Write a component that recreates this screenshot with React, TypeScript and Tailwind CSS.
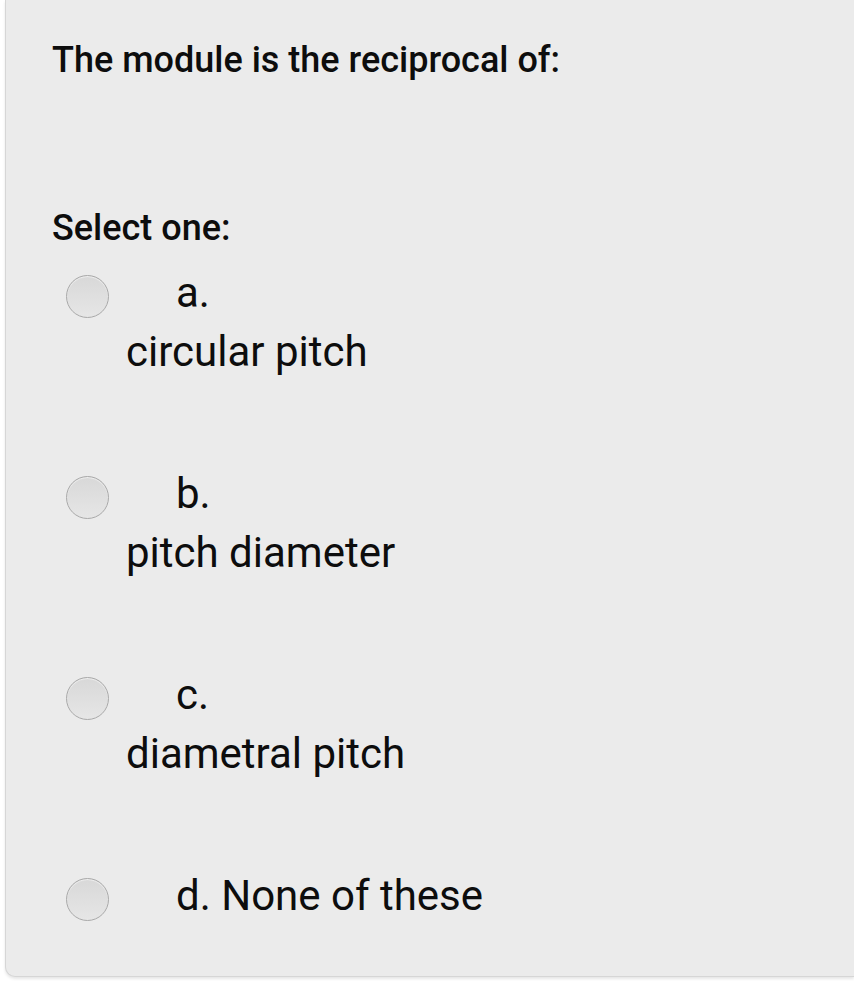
const options = [
  { letter: 'a.', text: 'circular pitch' },
  { letter: 'b.', text: 'pitch diameter' },
  { letter: 'c.', text: 'diametral pitch' },
  { letter: 'd.', text: 'None of these', inline: true },
];

function Radio() {
  return (
    <span className="mt-[12px] ml-[14px] block h-[43px] w-[43px] shrink-0 rounded-full border border-[#a9a9a9] bg-gradient-to-b from-[#d8d8d8] to-[#e6e6e6] shadow-[inset_0_1px_1px_rgba(255,255,255,0.6)]" />
  );
}

export default function App() {
  return (
    <div className="min-h-[981px] bg-white pl-[5px]" style={{ fontFamily: 'Roboto, "Noto Sans", sans-serif' }}>
      <div className="rounded-bl-[10px] border-b border-l border-[#d6d6d6] bg-[#ebebeb] pb-[51px] pl-[46px] pt-[40px] text-[#0d0d0d] shadow-[0_2px_3px_rgba(0,0,0,0.1)]">
        <div className="text-[36px] font-medium leading-[40px]">The module is the reciprocal of:</div>

        <div className="mt-[128px] text-[36px] font-medium leading-[40px]">Select one:</div>

        <div className="mt-[15px] flex flex-col gap-[83px]">
          {options.map((o) => (
            <div key={o.letter} className="flex items-start gap-[17px]">
              <Radio />
              <div className="text-[42px] leading-[59px]">
                {o.inline ? (
                  <div className="pl-[50px]">
                    {o.letter} {o.text}
                  </div>
                ) : (
                  <>
                    <div className="pl-[50px]">{o.letter}</div>
                    <div>{o.text}</div>
                  </>
                )}
              </div>
            </div>
          ))}
        </div>
      </div>
    </div>
  );
}
